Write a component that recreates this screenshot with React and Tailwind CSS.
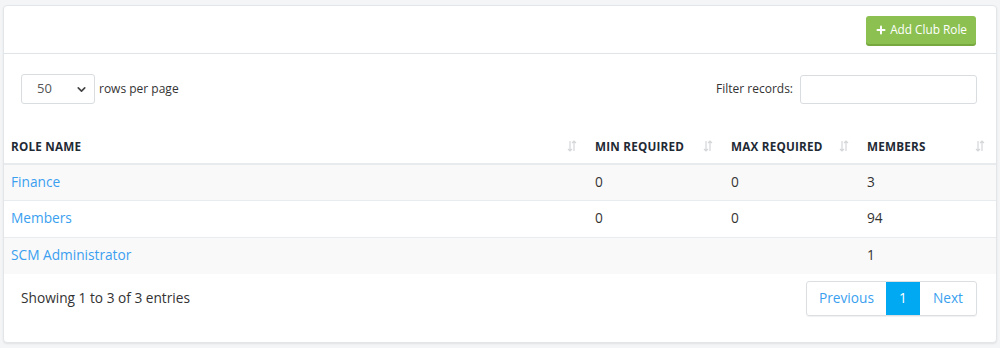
import { ChevronDown, Plus } from "lucide-react";

const roles = [
  { name: "Finance", min: "0", max: "0", members: "3" },
  { name: "Members", min: "0", max: "0", members: "94" },
  { name: "SCM Administrator", min: "", max: "", members: "1" },
];

function SortIcon() {
  return (
    <svg width="10" height="12" viewBox="0 0 10 12" className="text-[#d4d6d8]">
      <path d="M3 1v10M1 9l2 2 2-2" stroke="currentColor" strokeWidth="1.2" fill="none" />
      <path d="M7 11V1M5 3l2-2 2 2" stroke="currentColor" strokeWidth="1.2" fill="none" />
    </svg>
  );
}

function HeadCell({ label, width }) {
  return (
    <th className={`${width} h-[34px] px-[7px] text-left align-middle`}>
      <div className="flex items-center justify-between pr-1">
        <span className="text-[11.7px] font-bold uppercase tracking-[0.2px] text-[#1f2a35]">{label}</span>
        <SortIcon />
      </div>
    </th>
  );
}

export default function App() {
  return (
    <div className="min-h-[348px] bg-[#f4f5f6] px-[3px] pt-[5px] pb-[4px] font-['Open_Sans',sans-serif] text-[13.7px] text-[#333]">
      <div className="rounded-[4px] border border-[#e3e6e8] bg-white shadow-[0_1px_2px_rgba(0,0,0,0.08)]">
        <div className="flex h-[48px] items-center justify-end border-b border-[#dfe4e8] pr-[20px]">
          <button className="flex h-[28px] items-center gap-[3px] rounded-[3px] bg-[#8cc152] px-[9px] text-[11.8px] text-white shadow-[0_2px_0_#76a83f]">
            <Plus size={12} strokeWidth={4} />
            Add Club Role
          </button>
        </div>

        <div className="flex items-center justify-between pl-[17px] pr-[19px] pt-[20px] pb-[26px]">
          <div className="flex items-center gap-[4px]">
            <div className="flex h-[30px] w-[74px] items-center justify-between rounded-[3px] border border-[#d9dde0] pl-[15px] pr-[6px] text-[13px] text-[#555]">
              50
              <ChevronDown size={13} strokeWidth={3} className="text-[#444]" />
            </div>
            <span className="text-[12px] text-[#333]">rows per page</span>
          </div>
          <div className="flex items-center gap-[7px]">
            <span className="text-[12px] text-[#333]">Filter records:</span>
            <div className="h-[29px] w-[177px] rounded-[3px] border border-[#d9dde0]" />
          </div>
        </div>

        <table className="w-full border-collapse">
          <thead>
            <tr className="border-b-2 border-[#e7ebee]">
              <HeadCell label="Role Name" width="w-[584px]" />
              <HeadCell label="Min Required" width="w-[136px]" />
              <HeadCell label="Max Required" width="w-[136px]" />
              <HeadCell label="Members" width="" />
            </tr>
          </thead>
          <tbody>
            {roles.map((r, i) => (
              <tr
                key={r.name}
                className={`h-[36.5px] border-b border-[#e9ecef] last:border-b-0 ${i % 2 === 0 ? "bg-[#f9f9f9]" : "bg-white"}`}
              >
                <td className="px-[7px] text-[#3b9ff0]">{r.name}</td>
                <td className="px-[7px]">{r.min}</td>
                <td className="px-[7px]">{r.max}</td>
                <td className="px-[7px]">{r.members}</td>
              </tr>
            ))}
          </tbody>
        </table>

        <div className="flex items-center justify-between pl-[17px] pr-[19px] pt-[7px] pb-[26px]">
          <span className="text-[13.7px] text-[#333]">Showing 1 to 3 of 3 entries</span>
          <div className="flex h-[35px] overflow-hidden rounded-[3px] border border-[#dcdfe2] text-[13.7px] shadow-[0_1px_1px_rgba(0,0,0,0.06)]">
            <span className="flex items-center px-[12px] text-[#3b9ff0]">Previous</span>
            <span className="flex w-[34px] items-center justify-center bg-[#00a9f1] text-white">1</span>
            <span className="flex items-center px-[13px] text-[#3b9ff0]">Next</span>
          </div>
        </div>
      </div>
    </div>
  );
}
